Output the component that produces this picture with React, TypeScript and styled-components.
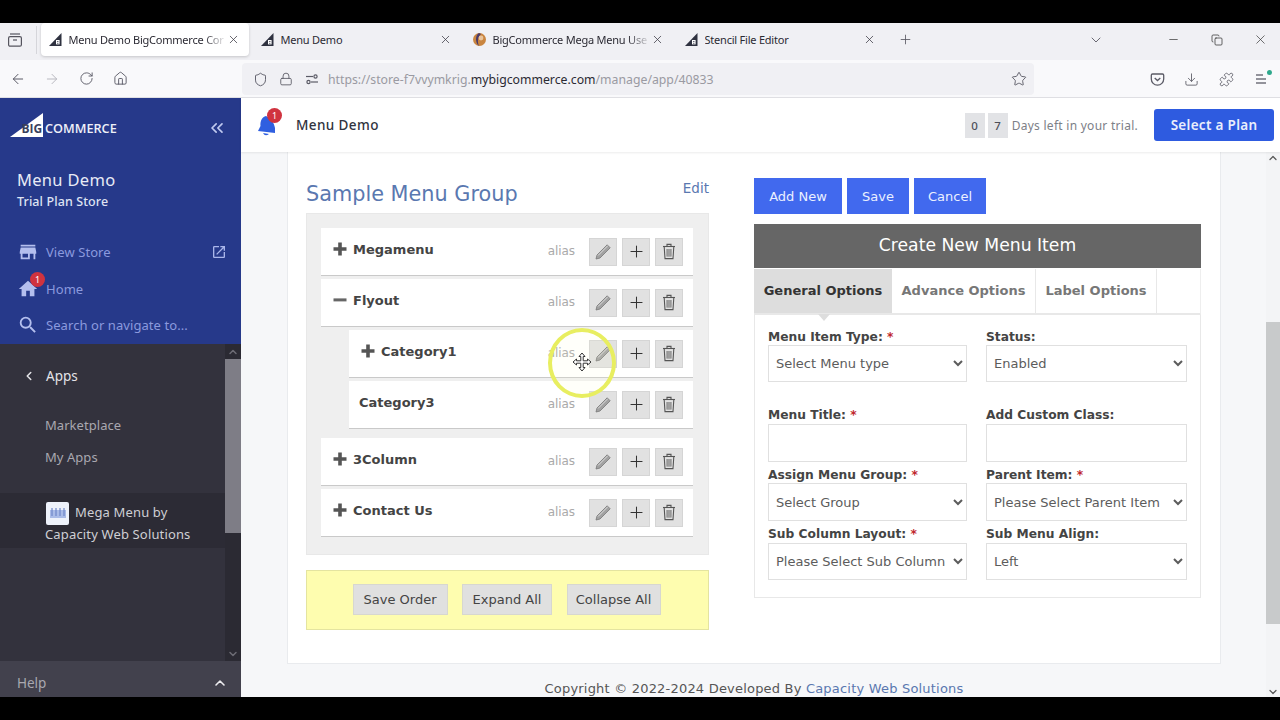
import React from "react";
import styled, { createGlobalStyle } from "styled-components";
import { ArrowLeft, ArrowRight, RotateCw, Home, Shield, Lock, Star, Download, Puzzle, X, Plus, ChevronDown, Minus, Copy, ChevronLeft, ChevronUp, ChevronsLeft } from "lucide-react";
import { MdStore, MdHome, MdOpenInNew, MdSearch } from "react-icons/md";

const Global = createGlobalStyle`
  html, body { margin: 0; padding: 0; background: #000; }
  * { box-sizing: border-box; }
`;
const UI = `"Noto Sans", "Open Sans", sans-serif`;
const WEB = `"DejaVu Sans", Verdana, sans-serif`;

const Page = styled.div`
  width: 1280px; height: 720px; overflow: hidden; position: relative;
  display: flex; flex-direction: column; background: #000; font-family: ${UI};
`;
const BlackBar = styled.div`height: ${p => p.$h}px; flex: none; background: #000;`;

const TabStrip = styled.div`
  height: 37px; flex: none; background: #f0f0f4; display: flex; align-items: center; padding-bottom: 4px; color: #2b2a33;
`;
const ViewButton = styled.div`
  width: 37px; display: flex; justify-content: center; padding-right: 6px; color: #55545e;
  border-right: 1px solid #d5d5da; height: 28px; align-items: center; flex: none;
`;
const Tabs = styled.div`display: flex; gap: 4px; margin-left: 4px; align-items: center;`;
const Tab = styled.div`
  width: 208px; height: 33px; border-radius: 4px; display: flex; align-items: center; padding: 0 6px 0 7px;
  background: ${p => (p.$active ? "#fff" : "transparent")};
  box-shadow: ${p => (p.$active ? "0 1px 3px rgba(0,0,0,.18)" : "none")};
`;
const TabLabel = styled.span`
  flex: 1; min-width: 0; margin: 0 -4px 0 5.5px; font-size: 11px; letter-spacing: -0.22px; white-space: nowrap; overflow: hidden;
  -webkit-mask-image: ${p => (p.$fade ? "linear-gradient(90deg,#000 85%,transparent 100%)" : "none")};
`;
const TabClose = styled.span`width: 20px; display: flex; justify-content: center; flex: none; color: #3a3944;`;
const NewTab = styled.span`display: flex; margin-left: 13px; color: #55545e;`;
const StripRight = styled.div`margin-left: auto; margin-right: -2px; display: flex; align-items: center;`;
const ListAll = styled.span`display: flex; margin-right: 48px; color: #55545e;`;
const WinBtn = styled.span`width: 43.5px; display: flex; justify-content: center; color: #333;`;

const NavBar = styled.div`
  height: 38px; flex: none; background: #f9f9fb; display: flex; align-items: center; padding-top: 1px; border-bottom: 1px solid #e0e0e4; color: #5b5b66;
`;
const NavIcons = styled.div`display: flex; width: 242px; padding-left: 1px; flex: none;`;
const NavIcon = styled.span`width: 34px; display: flex; justify-content: center; color: ${p => p.$dim ? "#b9b9c0" : "#5b5b66"};`;
const UrlBar = styled.div`
  width: 792px; height: 32px; background: #f0f0f4; border-radius: 4px; display: flex; align-items: center; padding: 0 7px 0 9px; flex: none;
`;
const UrlIcon = styled.span`width: 26px; display: flex; justify-content: center; color: #5b5b66; flex: none; margin-left: ${p => p.$first ? "-4px" : "0"};`;
const UrlText = styled.div`flex: 1; font-size: 12.27px; color: #9a9aa2; margin-left: 3px; white-space: nowrap;`;
const UrlStrong = styled.span`color: #2b2a33;`;
const NavRight = styled.div`display: flex; margin-left: 106px;`;
const NavRightIcon = styled.span`width: 34.5px; display: flex; justify-content: center; color: #5b5b66; position: relative;`;
const GreenDot = styled.span`position: absolute; top: -2px; right: 6px; width: 5px; height: 5px; border-radius: 50%; background: #2ea88c;`;

const Workspace = styled.div`flex: 1; min-height: 0; display: flex;`;
const Sidebar = styled.aside`width: 241px; flex: none; display: flex; flex-direction: column;`;
const BlueSection = styled.div`height: 246px; flex: none; background: #26398a; color: #fff; padding: 0 14px 0 17px;`;
const LogoRow = styled.div`height: 60px; display: flex; align-items: center; margin-left: -8px;`;
const LogoMark = styled.svg`margin-bottom: 6px; flex: none;`;
const LogoText = styled.span`font-size: 12.7px; font-weight: 600; color: #eef0f8; margin-left: 1px; font-family: "Open Sans", sans-serif;`;
const Collapse = styled.span`margin-left: auto; display: flex; color: #c0caf0;`;
const StoreBlock = styled.div`padding: 11px 0 23px;`;
const StoreName = styled.div`font-size: 16.5px; line-height: 22px; color: #e8ebf6; letter-spacing: 0.3px;`;
const StoreSub = styled.div`font-size: 12.5px; line-height: 20px; padding-top: 1px; height: 20px; font-weight: 500; color: #dfe3f3; letter-spacing: 0.1px;`;
const SideRow = styled.div`height: 36.5px; display: flex; align-items: center; color: #8b9ade; font-size: 13px; letter-spacing: 0.07px;`;
const SideIcon = styled.span`width: 29px; flex: none; display: flex; position: relative; color: #b4bfee;`;
const SideBadge = styled.span`
  position: absolute; top: -6px; left: 13px; width: 15px; height: 15px; border-radius: 50%;
  background: #d0333f; color: #fff; font-size: 9px; display: flex; align-items: center; justify-content: center;
`;
const SideEnd = styled.span`margin-left: auto; display: flex; color: #aab6ea;`;

const DarkSection = styled.div`flex: 1; min-height: 0; background: #33323d; display: flex;`;
const DarkList = styled.div`flex: 1; min-width: 0; display: flex; flex-direction: column; color: #b5b4bb;`;
const AppsRow = styled.div`height: 64px; display: flex; align-items: center; padding-left: 22px; color: #e4e4e8; font-size: 13.5px; gap: 10px;`;
const DarkLink = styled.div`height: ${p => p.$h}px; display: flex; align-items: center; padding-left: 45px; font-size: 13px; letter-spacing: 0.05px; color: #a9a8b0;`;
const ActiveApp = styled.div`
  margin-top: 20px; height: 55px; background: #2c2b35; padding: 8px 0 0 45px; font-size: 13px; line-height: 22px; color: #cfcfd4; letter-spacing: 0.15px;
`;
const AppGlyph = styled.span`display: inline-flex; vertical-align: middle; margin: -3px 6px -2px 1px; width: 23px; height: 23px; background: #eef2fb; border-radius: 2px; align-items: center; justify-content: center;`;
const SideScroll = styled.div`width: 16px; flex: none; background: #2b2a33; display: flex; flex-direction: column; align-items: center; color: #6c6b74;`;
const ScrollArrow = styled.div`height: 15px; display: flex; align-items: center; justify-content: center; flex: none; padding: ${p => p.$pad || 0}; margin-bottom: ${p => p.$mb || 0}px; margin-top: ${p => p.$mt || "0"};`;
const SideThumb = styled.div`width: 16px; height: 174px; background: #7e7d86; flex: none;`;
const HelpRow = styled.div`height: 36px; flex: none; background: #42414d; display: flex; align-items: center; padding: 8px 13px 0 17px; font-size: 13.5px; color: #a9a8b0;`;
const HelpChevron = styled.span`margin-left: auto; display: flex; color: #ecebef;`;

const Main = styled.main`flex: 1; min-width: 0; display: flex; flex-direction: column; background: #f6f7f9;`;
const Header = styled.header`
  height: 54px; flex: none; background: #fff; display: flex; align-items: center; padding: 0 6px 0 16px; box-shadow: 0 1px 2px rgba(0,0,0,.08); position: relative; z-index: 1;
`;
const Bell = styled.span`display: flex; position: relative; width: 39px; color: #2f5fe0; flex: none;`;
const BellBadge = styled.span`
  position: absolute; top: -4px; left: 10px; width: 15px; height: 15px; border-radius: 50%; background: #d0333f; color: #fff; font-size: 9px;
  display: flex; align-items: center; justify-content: center;
`;
const HeadTitle = styled.div`font-size: 13.5px; font-weight: 500; color: #313440; letter-spacing: 0.4px;`;
const Trial = styled.div`margin-left: auto; display: flex; align-items: center; font-size: 12px; color: #7d8087; letter-spacing: 0.27px;`;
const Digits = styled.div`display: flex; gap: 3px; margin-right: 4px;`;
const Digit = styled.span`width: 20px; height: 25px; background: #e2e3e6; color: #4d5059; display: flex; align-items: center; justify-content: center; font-size: 11.5px; font-weight: 500;`;
const PlanButton = styled.button`
  margin-left: 16px; width: 120px; height: 32px; border: 0; border-radius: 3px; background: #2e5be0; color: #e9eefc;
  font-family: ${UI}; font-weight: 600; font-size: 13.5px; letter-spacing: 0.3px;
`;

const Body = styled.div`flex: 1; min-height: 0; display: flex;`;
const Scroller = styled.div`flex: 1; min-width: 0; padding: 0 45px 0 46px; overflow: hidden; font-family: ${WEB};`;
const Card = styled.div`
  background: #fff; border: 1px solid #e9ebee; border-top: 0; height: 512px; display: flex; gap: 45px; padding: 26px 19px 0 18px;
`;
const LeftCol = styled.div`width: 403px; flex: none;`;
const TitleRow = styled.div`display: flex; justify-content: space-between; align-items: flex-start; margin-bottom: 3px;`;
const GroupTitle = styled.h2`margin: 0; font-size: 20.8px; font-weight: 400; line-height: 32px; color: #5a78b0;`;
const EditLink = styled.a`font-size: 13.5px; line-height: 20px; color: #5a78b0;`;
const MenuPanel = styled.div`background: #efefef; border: 1px solid #e8e8e8; padding: 14px 15px 14px 14px;`;
const NestedList = styled.div`padding-left: 28px; margin-bottom: 9px;`;
const Item = styled.div`
  height: 48px; background: #fff; border-bottom: 1px solid #c9c9c9; margin-bottom: 3px; display: flex; align-items: center; padding: 0 10px 0 ${p => p.$bare ? 10 : 12}px;
`;
const Toggle = styled.span`width: 20px; flex: none; display: flex; color: #555; margin-bottom: 6px;`;
const ItemName = styled.span`font-size: 13px; font-weight: 700; color: #444; margin-bottom: 5px;`;
const Alias = styled.span`margin-left: auto; margin-right: 14px; margin-bottom: 1px; font-size: 12px; color: #aaa; font-family: ${WEB}; letter-spacing: -0.1px;`;
const ToolGroup = styled.div`display: flex; gap: 5px;`;
const ToolButton = styled.span`width: 28px; height: 28px; background: #e1e1e1; border: 1px solid #d5d5d5; display: flex; align-items: center; justify-content: center; color: #555;`;
const YellowBar = styled.div`
  margin-top: 15px; height: 60px; padding: 0 2px 2px 0; background: #fefdaf; border: 1px solid #e4e4a0; display: flex; align-items: center; justify-content: center; gap: 14.5px;
`;
const GreyButton = styled.button`
  height: 31px; width: ${p => p.$w}px; padding: 0; background: #e0e0e0; border: 1px solid #d7d7d0; border-radius: 0; font-family: ${WEB}; font-size: 13px; color: #444;
`;
const RightCol = styled.div`width: 447px; flex: none;`;
const ActionRow = styled.div`display: flex; gap: 5px; margin-bottom: 10px;`;
const BlueButton = styled.button`
  height: 36px; width: ${p => p.$w}px; background: #4169ee; border: 0; color: #eaf0ff; font-family: ${WEB}; font-size: 13px;
`;
const FormHead = styled.div`height: 44px; padding-bottom: 2px; background: #666; color: #fff; display: flex; align-items: center; justify-content: center; font-size: 17.2px;`;
const TabsRow = styled.div`display: flex; height: 46px; border-bottom: 2px solid #e8e8e8; border-right: 1px solid #eee; margin-top: 1px;`;
const OptTab = styled.div`
  width: ${p => p.$w}px; display: flex; align-items: center; justify-content: center; padding-bottom: 2px; font-size: 13px; font-weight: 700; position: relative;
  color: ${p => (p.$active ? "#333" : "#777")}; background: ${p => (p.$active ? "#ddd" : "#fff")};
  border-right: ${p => (p.$active ? "0" : "1px solid #e8e8e8")};
  ${p => p.$active ? `&::after { content: ""; position: absolute; left: 64px; bottom: -8px; border: 6px solid transparent; border-bottom: 0; border-top: 7px solid #ddd; }` : ""}
`;
const FormBody = styled.div`
  border: 1px solid #e8e8e8; border-top: 0; padding: 13px 13px 17px; display: grid; grid-template-columns: 199px 201px; column-gap: 19px; row-gap: 4px;
`;
const Field = styled.div`margin-bottom: ${p => p.$mb || 0}px;`;
const Label = styled.label`display: block; font-size: 12.25px; font-weight: 700; line-height: 18px; margin-bottom: -1px; color: #444; white-space: nowrap;`;
const Req = styled.span`color: #c0272d;`;
const Select = styled.select`
  display: block; width: 100%; height: ${p => p.$h || 37}px; margin-top: ${p => p.$mt || 0}px; background: #fff; border: 1px solid #e0e0e0; border-radius: 0; padding: 0 3px; font-family: ${WEB}; font-size: 13px; color: #5c5c5c; outline: none;
`;
const Input = styled.input`display: block; width: 100%; height: 38px; margin-top: 1px; background: #fff; border: 1px solid #e0e0e0; outline: none;`;
const Footer = styled.div`text-align: center; font-size: 13px; line-height: 18px; margin-top: 16px; color: #555; letter-spacing: 0.2px;`;
const FootLink = styled.a`color: #5a78b0;`;

const PageScroll = styled.div`width: 14px; flex: none; background: #f3f4f6; display: flex; flex-direction: column; align-items: center; color: #555;`;
const PageThumb = styled.div`width: 14px; height: 302px; background: #c8cacb; flex: none;`;
const Spot = styled.div`
  position: absolute; left: 548px; top: 328px; width: 68px; height: 70px; border-radius: 50%; border: 4px solid #e8ee60; background: rgba(255,255,210,.12); pointer-events: none; z-index: 3;
`;
const MoveCursor = styled.svg`position: absolute; left: 572px; top: 352px; z-index: 4; pointer-events: none;`;

const BcMark = ({ size = 15, color = "#2f3240" }: { size?: number; color?: string }) => (
  <svg width={size} height={size} viewBox="0 0 15 15">
    <path d="M13.5 1 L13.5 14 L1 14 Z" fill={color} />
    <rect x="8" y="8" width="3.6" height="4.4" fill="#fff" />
    <rect x="9.2" y="9" width="1.2" height="0.9" fill={color} />
    <rect x="9.2" y="10.8" width="1.2" height="0.9" fill={color} />
  </svg>
);
const Pencil = () => (
  <svg width="18" height="18" viewBox="0 0 18 18">
    <path d="M13.2 1.8 L16.2 4.8 L6 15 L2 16 L3 12 Z" fill="#a2a2a2" stroke="#777" strokeWidth="0.8" />
    <path d="M4 12.5 L13.8 2.7" stroke="#dcdcdc" strokeWidth="1" />
  </svg>
);
const Trash = () => (
  <svg width="14" height="17" viewBox="0 0 14 17" fill="none" stroke="#555" strokeWidth="1.1">
    <path d="M1 3.5 H13" /><path d="M5 3.3 V1.4 H9 V3.3" />
    <path d="M2.2 3.8 L3 15.6 H11 L11.8 3.8" />
    <rect x="4.4" y="6" width="5.2" height="7.6" fill="#8a8a8a" stroke="none" />
    <path d="M6.1 6 V13.6 M7.9 6 V13.6" stroke="#c4c4c4" strokeWidth="0.6" />
  </svg>
);
const Tools = () => (
  <ToolGroup>
    <ToolButton><Pencil /></ToolButton>
    <ToolButton><Plus size={19} strokeWidth={1.3} color="#333" /></ToolButton>
    <ToolButton><Trash /></ToolButton>
  </ToolGroup>
);
const PlusMark = () => (
  <svg width="14" height="14" viewBox="0 0 14 14"><path d="M5.2 0.5 H8.8 V5.2 H13.5 V8.8 H8.8 V13.5 H5.2 V8.8 H0.5 V5.2 H5.2 Z" fill="#555" /></svg>
);
const MinusMark = () => (
  <svg width="14" height="14" viewBox="0 0 14 14"><rect x="0.5" y="5.4" width="13" height="3" fill="#666" /></svg>
);
const MenuItem = ({ name, open, bare }: { name: string; open?: boolean; bare?: boolean }) => (
  <Item $bare={bare}>
    {!bare && <Toggle>{open ? <MinusMark /> : <PlusMark />}</Toggle>}
    <ItemName>{name}</ItemName>
    <Alias>alias</Alias>
    <Tools />
  </Item>
);
const tabs = [
  { t: "Menu Demo BigCommerce Cor", active: true, fade: true },
  { t: "Menu Demo" },
  { t: "BigCommerce Mega Menu Use", fade: true, globe: true },
  { t: "Stencil File Editor" },
];

export default function App() {
  return (
    <Page>
      <Global />
      <BlackBar $h={23} />
      <TabStrip>
        <ViewButton>
          <svg width="16" height="16" viewBox="0 0 16 16" fill="none" stroke="currentColor" strokeWidth="1.2"><path d="M3 2 H13" /><rect x="1.6" y="4.6" width="12.8" height="9.6" rx="1.5" /><path d="M6 8 H10" /></svg>
        </ViewButton>
        <Tabs>
          {tabs.map(tab => (
            <Tab key={tab.t} $active={tab.active}>
              {tab.globe ? (
                <svg width="15" height="15" viewBox="0 0 15 15"><circle cx="7.5" cy="7.5" r="6.5" fill="#c9853f" /><path d="M7 1 C3 3 3 11 7 14 C5 9 6 5 9 2 Z" fill="#4a3b6b" /><circle cx="9" cy="6" r="2.4" fill="#e9c39a" /></svg>
              ) : <BcMark />}
              <TabLabel $fade={tab.fade}>{tab.t}</TabLabel>
              <TabClose><X size={13} strokeWidth={1.4} /></TabClose>
            </Tab>
          ))}
        </Tabs>
        <NewTab><Plus size={15} strokeWidth={1.3} /></NewTab>
        <StripRight>
          <ListAll><ChevronDown size={16} strokeWidth={1.3} /></ListAll>
          <WinBtn><Minus size={13} strokeWidth={1.3} /></WinBtn>
          <WinBtn><Copy size={12} strokeWidth={1.5} /></WinBtn>
          <WinBtn><X size={15} strokeWidth={1.1} /></WinBtn>
        </StripRight>
      </TabStrip>
      <NavBar>
        <NavIcons>
          <NavIcon><ArrowLeft size={16} strokeWidth={1.5} /></NavIcon>
          <NavIcon $dim><ArrowRight size={16} strokeWidth={1.5} /></NavIcon>
          <NavIcon><RotateCw size={15} strokeWidth={1.5} /></NavIcon>
          <NavIcon><Home size={15} strokeWidth={1.5} /></NavIcon>
        </NavIcons>
        <UrlBar>
          <UrlIcon $first><Shield size={15} strokeWidth={1.5} /></UrlIcon>
          <UrlIcon><Lock size={14} strokeWidth={1.5} /></UrlIcon>
          <UrlIcon>
            <svg width="14" height="12" viewBox="0 0 14 12" fill="none" stroke="currentColor" strokeWidth="1.2"><path d="M1 3.5 H8" /><circle cx="10.5" cy="3.5" r="1.6" /><path d="M6 9 H13" /><circle cx="3.5" cy="9" r="1.6" /></svg>
          </UrlIcon>
          <UrlText>https://store-f7vvymkrig.<UrlStrong>mybigcommerce.com</UrlStrong>/manage/app/40833</UrlText>
          <Star size={16} strokeWidth={1.4} />
        </UrlBar>
        <NavRight>
          <NavRightIcon>
            <svg width="15" height="15" viewBox="0 0 15 15" fill="none" stroke="currentColor" strokeWidth="1.3"><path d="M2.5 2 H12.5 A1.2 1.2 0 0 1 13.7 3.2 V7 A6.2 6.2 0 0 1 1.3 7 V3.2 A1.2 1.2 0 0 1 2.5 2 Z" /><path d="M4.7 6 L7.5 8.6 L10.3 6" /></svg>
          </NavRightIcon>
          <NavRightIcon><Download size={15} strokeWidth={1.4} /></NavRightIcon>
          <NavRightIcon><Puzzle size={15} strokeWidth={1.4} /></NavRightIcon>
          <NavRightIcon>
            <svg width="15" height="13" viewBox="0 0 15 13" fill="none" stroke="currentColor" strokeWidth="1.3"><path d="M3 3 H10" /><path d="M3 7 H13" /><path d="M3 11 H13" /></svg>
            <GreenDot />
          </NavRightIcon>
        </NavRight>
      </NavBar>
      <Workspace>
        <Sidebar>
          <BlueSection>
            <LogoRow>
              <LogoMark width="35" height="26" viewBox="0 0 35 26">
                <path d="M34 1 V25 H1 Z" fill="#fff" />
                <text x="12.5" y="21" fontFamily="Open Sans, sans-serif" fontWeight="700" fontSize="12" fill="#3a3f5c">BIG</text>
              </LogoMark>
              <LogoText>COMMERCE</LogoText>
              <Collapse><ChevronsLeft size={20} strokeWidth={2} /></Collapse>
            </LogoRow>
            <StoreBlock>
              <StoreName>Menu Demo</StoreName>
              <StoreSub>Trial Plan Store</StoreSub>
            </StoreBlock>
            <SideRow>
              <SideIcon><MdStore size={22} /></SideIcon>View Store
              <SideEnd><MdOpenInNew size={16} /></SideEnd>
            </SideRow>
            <SideRow>
              <SideIcon><MdHome size={22} /><SideBadge>1</SideBadge></SideIcon>Home
            </SideRow>
            <SideRow>
              <SideIcon><MdSearch size={22} /></SideIcon>Search or navigate to...
            </SideRow>
          </BlueSection>
          <DarkSection>
            <DarkList>
              <AppsRow><ChevronLeft size={14} strokeWidth={2.6} />Apps</AppsRow>
              <DarkLink $h={33}>Marketplace</DarkLink>
              <DarkLink $h={32}>My Apps</DarkLink>
              <ActiveApp>
                <AppGlyph>
                  <svg width="18" height="14" viewBox="0 0 18 14"><rect x="1" y="4" width="16" height="8" fill="#a9bbe8" /><path d="M3 2 V10 M7 2 V10 M11 2 V10 M15 2 V10" stroke="#6f86c8" strokeWidth="1.2" /></svg>
                </AppGlyph>
                Mega Menu by<br />Capacity Web Solutions
              </ActiveApp>
            </DarkList>
            <SideScroll>
              <ScrollArrow><ChevronUp size={12} strokeWidth={3} /></ScrollArrow>
              <SideThumb />
              <ScrollArrow $mt="auto"><ChevronDown size={12} strokeWidth={3} /></ScrollArrow>
            </SideScroll>
          </DarkSection>
          <HelpRow>Help<HelpChevron><ChevronUp size={16} strokeWidth={2.4} /></HelpChevron></HelpRow>
        </Sidebar>
        <Main>
          <Header>
            <Bell>
              <svg width="22" height="26" viewBox="0 0 22 26"><path d="M9 4 C5 5 3 9 3.5 14 L1 19 L18 21 L18 16 C17 11 14 6 9 4 Z" fill="#2f5fe0" /><path d="M6 21 Q8 25 12 22 Z" fill="#2f5fe0" /></svg>
              <BellBadge>1</BellBadge>
            </Bell>
            <HeadTitle>Menu Demo</HeadTitle>
            <Trial>
              <Digits><Digit>0</Digit><Digit>7</Digit></Digits>
              Days left in your trial.
            </Trial>
            <PlanButton>Select a Plan</PlanButton>
          </Header>
          <Body>
            <Scroller>
              <Card>
                <LeftCol>
                  <TitleRow>
                    <GroupTitle>Sample Menu Group</GroupTitle>
                    <EditLink>Edit</EditLink>
                  </TitleRow>
                  <MenuPanel>
                    <MenuItem name="Megamenu" />
                    <MenuItem name="Flyout" open />
                    <NestedList>
                      <MenuItem name="Category1" />
                      <MenuItem name="Category3" bare />
                    </NestedList>
                    <MenuItem name="3Column" />
                    <MenuItem name="Contact Us" />
                  </MenuPanel>
                  <YellowBar>
                    <GreyButton $w={95}>Save Order</GreyButton>
                    <GreyButton $w={90}>Expand All</GreyButton>
                    <GreyButton $w={94}>Collapse All</GreyButton>
                  </YellowBar>
                </LeftCol>
                <RightCol>
                  <ActionRow>
                    <BlueButton $w={88}>Add New</BlueButton>
                    <BlueButton $w={62}>Save</BlueButton>
                    <BlueButton $w={72}>Cancel</BlueButton>
                  </ActionRow>
                  <FormHead>Create New Menu Item</FormHead>
                  <TabsRow>
                    <OptTab $w={138} $active>General Options</OptTab>
                    <OptTab $w={144}>Advance Options</OptTab>
                    <OptTab $w={121}>Label Options</OptTab>
                  </TabsRow>
                  <FormBody>
                    <Field $mb={20}><Label>Menu Item Type: <Req>*</Req></Label><Select><option>Select Menu type</option></Select></Field>
                    <Field $mb={20}><Label>Status:</Label><Select><option>Enabled</option></Select></Field>
                    <Field><Label>Menu Title: <Req>*</Req></Label><Input /></Field>
                    <Field><Label>Add Custom Class:</Label><Input /></Field>
                    <Field><Label>Assign Menu Group: <Req>*</Req></Label><Select $h={38}><option>Select Group</option></Select></Field>
                    <Field><Label>Parent Item: <Req>*</Req></Label><Select $h={38}><option>Please Select Parent Item</option></Select></Field>
                    <Field><Label>Sub Column Layout: <Req>*</Req></Label><Select $mt={1}><option>Please Select Sub Column</option></Select></Field>
                    <Field><Label>Sub Menu Align:</Label><Select $mt={1}><option>Left</option></Select></Field>
                  </FormBody>
                </RightCol>
              </Card>
              <Footer>Copyright © 2022-2024 Developed By <FootLink>Capacity Web Solutions</FootLink></Footer>
            </Scroller>
            <PageScroll>
              <ScrollArrow $mb={155} $pad="0 0 3px"><ChevronUp size={12} strokeWidth={2.4} /></ScrollArrow>
              <PageThumb />
              <ScrollArrow $mt="auto" $pad="5px 0 0"><ChevronDown size={12} strokeWidth={2.4} /></ScrollArrow>
            </PageScroll>
          </Body>
        </Main>
      </Workspace>
      <BlackBar $h={23} />
      <Spot />
      <MoveCursor width="20" height="20" viewBox="0 0 20 20">
        <path d="M10 1 L13 4.5 H11.2 V8.8 H15.5 V7 L19 10 L15.5 13 V11.2 H11.2 V15.5 H13 L10 19 L7 15.5 H8.8 V11.2 H4.5 V13 L1 10 L4.5 7 V8.8 H8.8 V4.5 H7 Z" fill="#fff" stroke="#333" strokeWidth="1" />
      </MoveCursor>
    </Page>
  );
}
